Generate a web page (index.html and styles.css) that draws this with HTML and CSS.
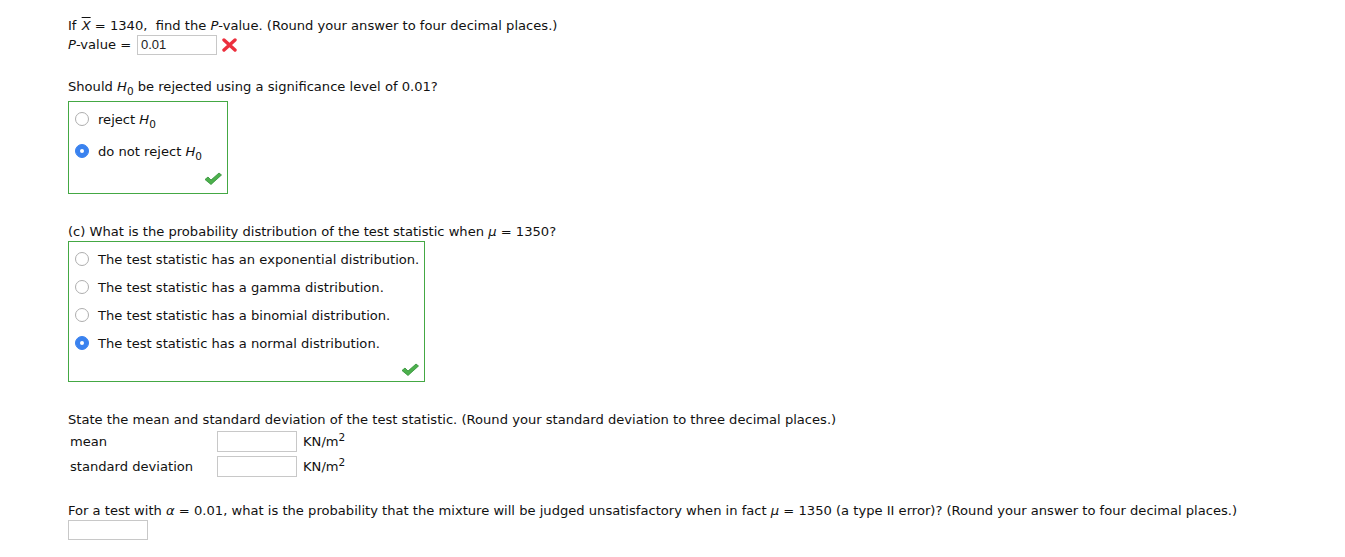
FILE: index.html
```html
<!DOCTYPE html>
<html lang="en">
<head>
    <meta charset="UTF-8">
    <title>Hypothesis Test</title>
    <link rel="stylesheet" href="styles.css">
</head>
<body>
    <div class="page">
        <div class="line">If <span class="xbar">X</span> = 1340,&nbsp; find the <i>P</i>-value. (Round your answer to four decimal places.)</div>
        <div class="line row">
            <span class="pv-label"><i>P</i>-value =</span>
            <span class="field filled">0.01</span>
            <svg class="wrong" width="15" height="14" viewBox="0 0 15 14">
                <path d="M2 2 L13 12 M13 2 L2 12" stroke="#ec2f3d" stroke-width="3.4" stroke-linecap="round"/>
            </svg>
        </div>

        <div class="line gap-lg">Should <i>H</i><sub>0</sub> be rejected using a significance level of 0.01?</div>
        <div class="choices small">
            <div class="option"><span class="radio"></span><span>reject <i>H</i><sub>0</sub></span></div>
            <div class="option"><span class="radio on"></span><span>do not reject <i>H</i><sub>0</sub></span></div>
            <div class="mark">
                <svg width="18" height="14" viewBox="0 0 18 14"><path d="M1 7.5 L4 5 L7 8 L15 1 L17.5 3 L7 12.5 Z" fill="#4cb04c" stroke="#2f8f35" stroke-width="0.8"/></svg>
            </div>
        </div>

        <div class="line gap-xl">(c) What is the probability distribution of the test statistic when <i>&mu;</i> = 1350?</div>
        <div class="choices wide">
            <div class="option"><span class="radio"></span><span>The test statistic has an exponential distribution.</span></div>
            <div class="option"><span class="radio"></span><span>The test statistic has a gamma distribution.</span></div>
            <div class="option"><span class="radio"></span><span>The test statistic has a binomial distribution.</span></div>
            <div class="option"><span class="radio on"></span><span>The test statistic has a normal distribution.</span></div>
            <div class="mark">
                <svg width="18" height="14" viewBox="0 0 18 14"><path d="M1 7.5 L4 5 L7 8 L15 1 L17.5 3 L7 12.5 Z" fill="#4cb04c" stroke="#2f8f35" stroke-width="0.8"/></svg>
            </div>
        </div>

        <div class="line gap-xl">State the mean and standard deviation of the test statistic. (Round your standard deviation to three decimal places.)</div>
        <div class="stats">
            <div class="stat-row"><span class="stat-label">mean</span><span class="field"></span><span class="unit">KN/m<sup>2</sup></span></div>
            <div class="stat-row"><span class="stat-label">standard deviation</span><span class="field"></span><span class="unit">KN/m<sup>2</sup></span></div>
        </div>

        <div class="line gap-md">For a test with <i>&alpha;</i> = 0.01, what is the probability that the mixture will be judged unsatisfactory when in fact <i>&mu;</i> = 1350 (a type II error)? (Round your answer to four decimal places.)</div>
        <span class="field"></span>
    </div>
</body>
</html>
```

FILE: styles.css
```css
body { margin: 0; background: #fff; color: #111; font-family: "DejaVu Sans", Verdana, sans-serif; font-size: 13.1px; }
.page { padding: 15px 0 0 68px; }
.line { height: 19px; padding-top: 1px; line-height: 20px; white-space: nowrap; }
.row { display: flex; align-items: center; height: 20px; padding-top: 0; }
.gap-lg { margin-top: 21px; margin-bottom: 5px; }
.gap-xl { margin-top: 27px; }
.gap-md { margin-top: 23px; }
sub { font-size: 10.5px; vertical-align: -4px; line-height: 0; }
sup { font-size: 10.5px; vertical-align: 5px; line-height: 0; }
.xbar { font-style: italic; text-decoration: overline; padding-left: 1px; }

.pv-label { width: 69px; }
.field { display: block; box-sizing: border-box; width: 80px; height: 20px; border: 1px solid #c8c8c8; background: #fff; }
.field.filled { font-family: "Liberation Sans", Arial, sans-serif; font-size: 13px; line-height: 18px; padding-left: 3px; color: #222; }
.wrong { margin-left: 5px; }

.choices { box-sizing: border-box; border: 1px solid #44a844; padding: 5px 5px 0 6px; }
.choices.small { width: 160px; }
.choices.wide { width: 357px; }
.option { display: flex; align-items: center; height: 24px; white-space: nowrap; }
.small .option { margin-bottom: 8px; }
.wide .option { margin-bottom: 4px; }
.radio { box-sizing: border-box; width: 14px; height: 14px; border-radius: 50%; border: 1px solid #aeaeae; background: #fff; margin-right: 9px; flex: none; display: flex; align-items: center; justify-content: center; }
.radio.on { background: #3a82ef; border-color: #3a82ef; }
.radio.on::after { content: ""; width: 4px; height: 4px; border-radius: 50%; background: #fff; }
.mark { box-sizing: border-box; height: 22px; display: flex; justify-content: flex-end; align-items: flex-start; }
.mark svg { display: block; }
.small .mark { padding-top: 1px; }
.wide .mark { padding-top: 4px; }

.stats { margin-top: 1px; }
.stat-row { display: flex; align-items: center; height: 22px; margin-bottom: 3px; }
.stat-label { width: 149px; padding-left: 2px; box-sizing: border-box; }
.stat-row .field { height: 21px; }
.unit { margin-left: 6px; }
```
